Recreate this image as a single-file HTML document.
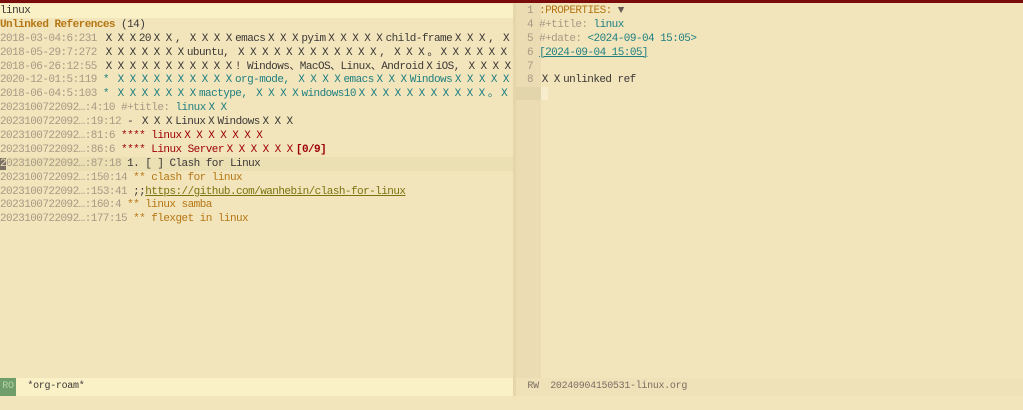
<!DOCTYPE html><html><head><meta charset="utf-8"><style>
body{margin:0;width:1023px;height:410px;background:#f2e5bc;font-family:"Liberation Mono","DejaVu Sans Mono","Noto Sans CJK SC",monospace;font-size:11px;letter-spacing:-0.55px;overflow:hidden;position:relative;color:#3c3836}
.top{position:absolute;left:0;top:0;width:1023px;height:3px;background:#7a0c0c}
.l{position:absolute;left:0;top:4px;width:513px}
.r{position:absolute;left:516px;top:4px;width:507px;height:374px}
.row{height:13.9px;line-height:15px;white-space:pre;overflow:hidden}
.g{color:#a89984}.t{color:#1f7f80}.rd{color:#9d0006}.o{color:#b57614}.gr{color:#79740e;text-decoration:underline}
.x{display:inline-block;width:12px;text-align:center;letter-spacing:0}
.div{position:absolute;left:513px;top:3px;width:3px;height:393px;background:#e6d6ac}
.ln{position:absolute;left:516px;top:3px;width:25px;height:375px;background:#ebdcb3}
.mode{position:absolute;top:378px;height:18px;line-height:18px;font-size:10px;letter-spacing:-0.3px;white-space:pre}
</style></head><body>
<div class="top"></div>
<div class="ln"></div><div class="div"></div>
<div class="l">
<div class="row" style="background:#fbf1c7">linux</div>
<div class="row"><span class="o" style="font-weight:bold">Unlinked References</span> (14)</div>
<div class="row"><span class="g">2018-03-04:6:231 </span><span class="x">X</span><span class="x">X</span><span class="x">X</span>20<span class="x">X</span><span class="x">X</span>, <span class="x">X</span><span class="x">X</span><span class="x">X</span><span class="x">X</span>emacs<span class="x">X</span><span class="x">X</span><span class="x">X</span>pyim<span class="x">X</span><span class="x">X</span><span class="x">X</span><span class="x">X</span><span class="x">X</span>child-frame<span class="x">X</span><span class="x">X</span><span class="x">X</span>, <span class="x">X</span><span class="x">X</span><span class="x">X</span><span class="x">X</span><span class="x">X</span></div>
<div class="row"><span class="g">2018-05-29:7:272 </span><span class="x">X</span><span class="x">X</span><span class="x">X</span><span class="x">X</span><span class="x">X</span><span class="x">X</span><span class="x">X</span>ubuntu, <span class="x">X</span><span class="x">X</span><span class="x">X</span><span class="x">X</span><span class="x">X</span><span class="x">X</span><span class="x">X</span><span class="x">X</span><span class="x">X</span><span class="x">X</span><span class="x">X</span><span class="x">X</span>, <span class="x">X</span><span class="x">X</span><span class="x">X</span>。<span class="x">X</span><span class="x">X</span><span class="x">X</span><span class="x">X</span><span class="x">X</span><span class="x">X</span><span class="x">X</span><span class="x">X</span><span class="x">X</span><span class="x">X</span><span class="x">X</span><span class="x">X</span><span class="x">X</span></div>
<div class="row"><span class="g">2018-06-26:12:55 </span><span class="x">X</span><span class="x">X</span><span class="x">X</span><span class="x">X</span><span class="x">X</span><span class="x">X</span><span class="x">X</span><span class="x">X</span><span class="x">X</span><span class="x">X</span><span class="x">X</span>! Windows、MacOS、Linux、Android<span class="x">X</span>iOS, <span class="x">X</span><span class="x">X</span><span class="x">X</span><span class="x">X</span>!</div>
<div class="row t"><span class="g">2020-12-01:5:119 </span>* <span class="x">X</span><span class="x">X</span><span class="x">X</span><span class="x">X</span><span class="x">X</span><span class="x">X</span><span class="x">X</span><span class="x">X</span><span class="x">X</span><span class="x">X</span>org-mode, <span class="x">X</span><span class="x">X</span><span class="x">X</span><span class="x">X</span>emacs<span class="x">X</span><span class="x">X</span><span class="x">X</span>Windows<span class="x">X</span><span class="x">X</span><span class="x">X</span><span class="x">X</span><span class="x">X</span><span class="x">X</span><span class="x">X</span><span class="x">X</span><span class="x">X</span></div>
<div class="row t"><span class="g">2018-06-04:5:103 </span>* <span class="x">X</span><span class="x">X</span><span class="x">X</span><span class="x">X</span><span class="x">X</span><span class="x">X</span><span class="x">X</span>mactype, <span class="x">X</span><span class="x">X</span><span class="x">X</span><span class="x">X</span>windows10<span class="x">X</span><span class="x">X</span><span class="x">X</span><span class="x">X</span><span class="x">X</span><span class="x">X</span><span class="x">X</span><span class="x">X</span><span class="x">X</span><span class="x">X</span><span class="x">X</span>。<span class="x">X</span><span class="x">X</span><span class="x">X</span>Linux</div>
<div class="row"><span class="g">2023100722092…:4:10 #+title: </span><span class="t">linux<span class="x">X</span><span class="x">X</span></span></div>
<div class="row"><span class="g">2023100722092…:19:12 </span>- <span class="x">X</span><span class="x">X</span><span class="x">X</span>Linux<span class="x">X</span>Windows<span class="x">X</span><span class="x">X</span><span class="x">X</span></div>
<div class="row rd"><span class="g">2023100722092…:81:6 </span>**** linux<span class="x">X</span><span class="x">X</span><span class="x">X</span><span class="x">X</span><span class="x">X</span><span class="x">X</span><span class="x">X</span></div>
<div class="row rd"><span class="g">2023100722092…:86:6 </span>**** Linux Server<span class="x">X</span><span class="x">X</span><span class="x">X</span><span class="x">X</span><span class="x">X</span><span class="x">X</span><span style="font-weight:bold">[0/9]</span></div>
<div class="row" style="background:#ebdfb4"><span class="g"><span style="background:#7c6f64;color:#f2e5bc">2</span>023100722092…:87:18 </span>1. [ ] Clash for Linux</div>
<div class="row o"><span class="g">2023100722092…:150:14 </span>** clash for linux</div>
<div class="row"><span class="g">2023100722092…:153:41 </span>;;<span class="gr">https://github.com/wanhebin/clash-for-linux</span></div>
<div class="row o"><span class="g">2023100722092…:160:4 </span>** linux samba</div>
<div class="row o"><span class="g">2023100722092…:177:15 </span>** flexget in linux</div>
</div>
<div class="r">
<div class="row"><span class="g" style="display:inline-block;width:17px;text-align:right">1</span> <span class="o">:PROPERTIES: </span><span style="color:#665c54">▼</span></div>
<div class="row"><span class="g" style="display:inline-block;width:17px;text-align:right">4</span> <span class="g">#+title: </span><span class="t">linux</span></div>
<div class="row"><span class="g" style="display:inline-block;width:17px;text-align:right">5</span> <span class="g">#+date: </span><span class="t">&lt;2024-09-04 15:05&gt;</span></div>
<div class="row"><span class="g" style="display:inline-block;width:17px;text-align:right">6</span> <span class="t" style="text-decoration:underline">[2024-09-04 15:05]</span></div>
<div class="row"><span class="g" style="display:inline-block;width:17px;text-align:right">7</span></div>
<div class="row"><span class="g" style="display:inline-block;width:17px;text-align:right">8</span> <span class="x">X</span><span class="x">X</span>unlinked ref</div>
<div class="row"><span style="display:inline-block;width:25px;height:13px;background:#e3d5ab;vertical-align:top"></span><span style="display:inline-block;width:7px;height:13px;background:#f7eccb;vertical-align:top"></span></div>
</div>
<div class="mode" style="left:0;width:513px;background:#fbf1c7"><span style="display:inline-block;width:16px;background:#6f9e6a;color:#b8d4a8;text-align:center">RO</span>  *org-roam*</div>
<div class="mode" style="left:516px;width:507px;background:#efe1b8;color:#7c6f64">  RW  20240904150531-linux.org</div>
</body></html>
